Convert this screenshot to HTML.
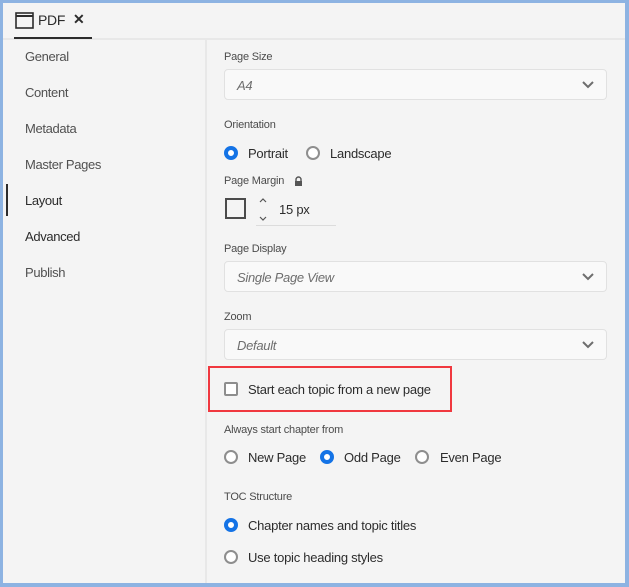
<!DOCTYPE html>
<html><head><style>
*{margin:0;padding:0;box-sizing:border-box}
body{width:629px;height:587px;overflow:hidden;background:#8db3e2;font-family:"Liberation Sans",sans-serif;color:#2c2c2c;position:relative}
.frame{position:absolute;left:3px;top:3px;width:622px;height:580px;background:#f4f4f4}
.a{position:absolute;white-space:nowrap}
.nav{font-size:13px;color:#505050;letter-spacing:-0.35px}
.lbl{font-size:11px;color:#4b4b4b;letter-spacing:-0.2px}
.txt{font-size:13px;color:#2c2c2c;letter-spacing:-0.25px}
.dd{position:absolute;left:221px;width:383px;height:31px;background:#f9f9f9;border:1px solid #e1e1e1;border-radius:4px}
.dd i{position:absolute;left:12px;top:8px;font-size:13px;color:#6e6e6e;font-style:italic;letter-spacing:-0.3px}
.dd svg{position:absolute;right:12px;top:11px}
.r{position:absolute;width:14px;height:14px;border:2px solid #8e8e8e;border-radius:50%;background:#fff}
.r.on{border:4px solid #1473e6}
</style></head><body>
<div class="frame">
<div class="a" style="left:0;top:35px;width:622px;height:2px;background:#e8e8e8"></div>
<div class="a" style="left:202px;top:37px;width:2px;height:543px;background:#e8e8e8"></div>
<svg class="a" style="left:12px;top:9px" width="20" height="18"><rect x="1" y="1" width="17" height="15" fill="none" stroke="#2c2c2c" stroke-width="1.6"/><line x1="1" y1="4" x2="18" y2="4" stroke="#2c2c2c" stroke-width="2"/></svg>
<div class="a" style="left:35px;top:9px;font-size:14px;letter-spacing:-0.3px">PDF</div>
<div class="a" style="left:70px;top:8px;font-size:14px;font-weight:bold">✕</div>
<div class="a" style="left:11px;top:34px;width:78px;height:2px;background:#2c2c2c"></div>
<div class="a nav" style="left:22px;top:46px">General</div>
<div class="a nav" style="left:22px;top:82px">Content</div>
<div class="a nav" style="left:22px;top:118px">Metadata</div>
<div class="a nav" style="left:22px;top:154px">Master Pages</div>
<div class="a" style="left:3px;top:181px;width:2px;height:32px;background:#2c2c2c"></div>
<div class="a nav" style="left:22px;top:190px;color:#2c2c2c">Layout</div>
<div class="a nav" style="left:22px;top:226px;color:#2c2c2c">Advanced</div>
<div class="a nav" style="left:22px;top:262px">Publish</div>

<div class="a lbl" style="left:221px;top:48px">Page Size</div>
<div class="dd" style="top:66px"><i>A4</i><svg width="12" height="8"><path d="M1 1l5 5 5-5" fill="none" stroke="#6e6e6e" stroke-width="2"/></svg></div>
<div class="a lbl" style="left:221px;top:116px">Orientation</div>
<div class="r on" style="left:221px;top:143px"></div>
<div class="a txt" style="left:245px;top:143px">Portrait</div>
<div class="r" style="left:303px;top:143px"></div>
<div class="a txt" style="left:327px;top:143px">Landscape</div>
<div class="a lbl" style="left:221px;top:172px">Page Margin</div>
<svg class="a" style="left:291px;top:173px" width="9" height="10"><path d="M2 5V3.5a2.5 2.5 0 0 1 5 0V5" fill="none" stroke="#555" stroke-width="1.4"/><rect x="1" y="5" width="7" height="5" fill="#555"/></svg>
<div class="a" style="left:222px;top:195px;width:21px;height:21px;border:2.5px solid #4b4b4b"></div>
<svg class="a" style="left:255px;top:193px" width="10" height="28"><path d="M2 6l3-3 3 3M2 21l3 3 3-3" fill="none" stroke="#555" stroke-width="1.2"/></svg>
<div class="a txt" style="left:276px;top:199px">15 px</div>
<div class="a" style="left:253px;top:222px;width:80px;height:1px;background:#dcdcdc"></div>
<div class="a lbl" style="left:221px;top:240px">Page Display</div>
<div class="dd" style="top:258px"><i>Single Page View</i><svg width="12" height="8"><path d="M1 1l5 5 5-5" fill="none" stroke="#6e6e6e" stroke-width="2"/></svg></div>
<div class="a lbl" style="left:221px;top:308px">Zoom</div>
<div class="dd" style="top:326px"><i>Default</i><svg width="12" height="8"><path d="M1 1l5 5 5-5" fill="none" stroke="#6e6e6e" stroke-width="2"/></svg></div>
<div class="a" style="left:205px;top:363px;width:244px;height:46px;border:2px solid #f0383f"></div>
<div class="a" style="left:221px;top:379px;width:14px;height:14px;border:2px solid #8e8e8e;border-radius:2px;background:#fff"></div>
<div class="a txt" style="left:245px;top:379px">Start each topic from a new page</div>
<div class="a lbl" style="left:221px;top:421px">Always start chapter from</div>
<div class="r" style="left:221px;top:447px"></div>
<div class="a txt" style="left:245px;top:447px">New Page</div>
<div class="r on" style="left:317px;top:447px"></div>
<div class="a txt" style="left:341px;top:447px">Odd Page</div>
<div class="r" style="left:412px;top:447px"></div>
<div class="a txt" style="left:437px;top:447px">Even Page</div>
<div class="a lbl" style="left:221px;top:488px">TOC Structure</div>
<div class="r on" style="left:221px;top:515px"></div>
<div class="a txt" style="left:245px;top:515px">Chapter names and topic titles</div>
<div class="r" style="left:221px;top:547px"></div>
<div class="a txt" style="left:245px;top:547px">Use topic heading styles</div>
</div>
</body></html>
